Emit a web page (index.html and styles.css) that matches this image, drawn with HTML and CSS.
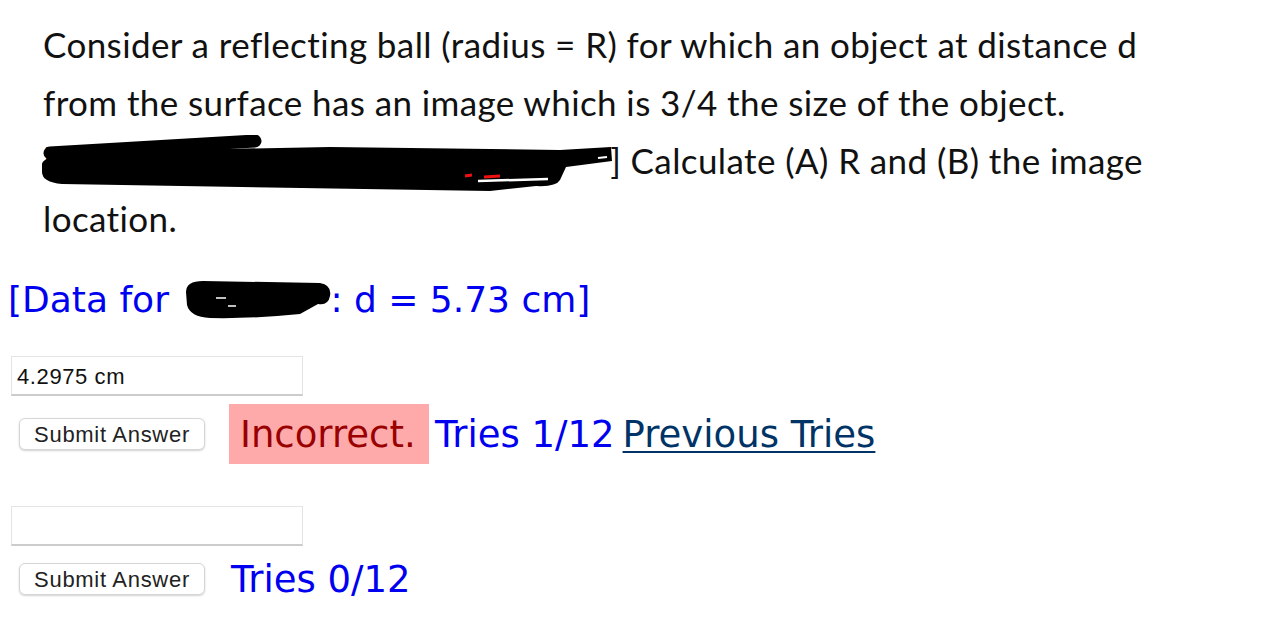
FILE: index.html
```html
<!DOCTYPE html>
<html>
<head>
<meta charset="utf-8">
<link rel="stylesheet" href="styles.css">
</head>
<body>
<div class="question">
  Consider a reflecting ball (radius = R) for which an object at distance d<br>
  from the surface has an image which is 3/4 the size of the object.<br>
  [<span class="redact redact-hint"></span>] Calculate (A) R and (B) the image<br>
  location.
  <svg class="scribble scribble-hint" viewBox="35 135 590 60" width="590" height="60">
    <path d="M50 153 L255 141" stroke="#000" stroke-width="13" stroke-linecap="round" fill="none"/>
    <path d="M42 164 Q44 152 110 151 L330 147 L560 150 L611 147 L612 161 L566 167 L560 180 Q556 187 536 186 L490 191 L62 184 Q42 182 42 172 Z" fill="#000"/>
    <path d="M478 181 L548 179" stroke="#fff" stroke-width="2.5" fill="none"/>
    <path d="M598 158 L607 157" stroke="#fff" stroke-width="2" fill="none"/>
    <path d="M465 176 L472 175 M484 177 L500 176" stroke="#e11" stroke-width="3" fill="none"/>
  </svg>
</div>

<div class="data">
  [Data for <span class="redact redact-name"></span>: d = 5.73 cm]
  <svg class="scribble scribble-name" viewBox="183 279 160 44" width="160" height="44">
    <path d="M186 292 Q186 281 203 281 L320 283 Q332 285 330 296 Q328 306 318 304 L300 314 Q250 319 210 318 Q190 317 187 305 Z" fill="#000"/>
    <path d="M216 298 L226 298 M228 306 L236 306" stroke="#fff" stroke-width="1.5" fill="none"/>
  </svg>
</div>

<input class="answer-input first" type="text" value="4.2975 cm">
<div class="row row-result">
  <button class="submit">Submit Answer</button>
  <span class="feedback">Incorrect.</span>
  <span class="tries">Tries 1/12</span>
  <a class="prev" href="#">Previous Tries</a>
</div>

<input class="answer-input second" type="text" value="">
<div class="row row-empty">
  <button class="submit">Submit Answer</button>
  <span class="tries tries-empty">Tries 0/12</span>
</div>
</body>
</html>
```

FILE: styles.css
```css
body {
  margin: 8px;
  background: #fff;
  font-family: "Liberation Sans", Arial, sans-serif;
}

.question {
  position: relative;
  margin: 7px 0 0 35px;
  font-family: "Lato", sans-serif;
  font-size: 35px;
  letter-spacing: 0.4px;
  font-variant-ligatures: none;
  line-height: 58px;
  color: #111;
  white-space: nowrap;
}

.redact {
  display: inline-block;
}

.redact-hint {
  width: 556px;
}

.redact-name {
  width: 150px;
}

.scribble {
  position: absolute;
  pointer-events: none;
}

.scribble-hint {
  left: -8px;
  top: 120px;
}

.data {
  position: relative;
  margin-top: 32px;
  font-family: "DejaVu Sans", Verdana, sans-serif;
  font-size: 36px;
  line-height: 42px;
  color: #0000f0;
  white-space: nowrap;
}

.scribble-name {
  left: 175px;
  top: 0;
}

.answer-input {
  display: block;
  box-sizing: border-box;
  width: 292px;
  height: 40px;
  margin-left: 3px;
  padding: 2px 5px 0;
  border: 1px solid #e4e4e4;
  border-bottom: 2px solid #cccccc;
  background: #fff;
  font-family: "Liberation Sans", Arial, sans-serif;
  font-size: 22px;
  letter-spacing: 0.6px;
  color: #111;
  outline: none;
}

.answer-input.first {
  margin-top: 35px;
}

.answer-input.second {
  margin-top: 42px;
}

.row {
  display: flex;
  align-items: center;
  white-space: nowrap;
}

.row-result {
  margin-top: 8px;
  height: 60px;
}

.row-empty {
  margin-top: 12px;
  height: 42px;
}

.submit {
  box-sizing: border-box;
  width: 186px;
  height: 32px;
  margin-left: 11px;
  padding: 2px 0 0;
  border: 1px solid #d6d6d6;
  border-radius: 6px;
  background: #fff;
  box-shadow: 0 1px 2px rgba(0, 0, 0, 0.18);
  font-family: "Liberation Sans", Arial, sans-serif;
  font-size: 22px;
  letter-spacing: 0.7px;
  color: #222;
}

.feedback {
  box-sizing: border-box;
  display: flex;
  align-items: center;
  width: 200px;
  height: 60px;
  margin-left: 24px;
  padding-left: 11px;
  background: #ffaaaa;
  color: #990000;
  font-family: "DejaVu Sans", Verdana, sans-serif;
  font-size: 37px;
}

.tries {
  margin-left: 6px;
  font-family: "DejaVu Sans", Verdana, sans-serif;
  font-size: 37px;
  color: #0000f0;
}

.tries-empty {
  margin-left: 26px;
}

.prev {
  margin-left: 8px;
  font-family: "DejaVu Sans", Verdana, sans-serif;
  font-size: 37px;
  color: #003366;
  text-decoration: underline;
  text-decoration-thickness: 2px;
  text-underline-offset: 4px;
}
```
